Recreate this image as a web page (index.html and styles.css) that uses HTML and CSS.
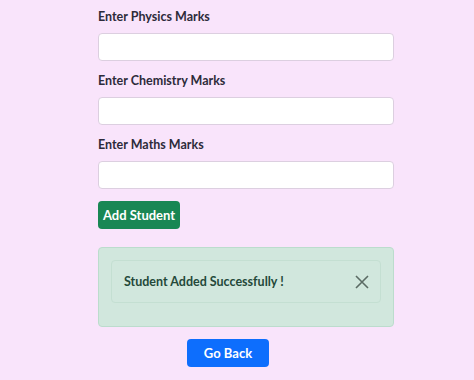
FILE: index.html
```html
<!DOCTYPE html>
<html>
<head lang="en">
    <meta charset="UTF-8">
    <title>Add Student</title>
    <link rel="stylesheet" href="styles.css">
</head>
<body>
<div class="container">
    <form class="student-form">
        <div class="field">
            <label for="physics">Enter Physics Marks</label>
            <input type="text" id="physics"/>
        </div>
        <div class="field">
            <label for="chemistry">Enter Chemistry Marks</label>
            <input type="text" id="chemistry"/>
        </div>
        <div class="field">
            <label for="maths">Enter Maths Marks</label>
            <input type="text" id="maths"/>
        </div>
        <button type="button" class="btn btn-add">Add Student</button>
    </form>

    <div class="result">
        <div class="alert">
            <span>Student Added Successfully !</span>
            <span class="close">
                <svg width="14" height="14" viewBox="0 0 14 14">
                    <path d="M1 1 L13 13 M13 1 L1 13" stroke="#5b6b64" stroke-width="1.6" fill="none"/>
                </svg>
            </span>
        </div>
    </div>

    <button type="button" class="btn btn-back">Go Back</button>
</div>
</body>
</html>
```

FILE: styles.css
```css
html, body {
    padding: 0;
    margin: 0;
}

body {
    background: #f9e4fb;
    font-family: 'Lato', 'Noto Sans', sans-serif;
    color: #2d2b3a;
}

.container {
    width: 296px;
    margin: 0 auto;
    padding-top: 5px;
    position: relative;
    left: 9px;
}

.student-form {
    margin: 0;
}

.field {
    margin-bottom: 8px;
}

.field label {
    display: block;
    font-size: 12.5px;
    font-weight: 700;
    line-height: 20px;
    padding-top: 2px;
    margin-bottom: 6px;
}

.field input {
    display: block;
    box-sizing: border-box;
    width: 100%;
    height: 28px;
    border: 1px solid #dccfe0;
    border-radius: 4px;
    background: #fff;
    outline: none;
}

.btn {
    display: block;
    font-family: 'Lato', 'Noto Sans', sans-serif;
    font-size: 13px;
    font-weight: 700;
    color: #fff;
    border: none;
    border-radius: 4px;
    height: 28px;
    width: 82px;
    padding: 0;
    white-space: nowrap;
}

.btn-add {
    background: #198754;
    margin-top: 12px;
}

.btn-back {
    background: #0d6efd;
    margin: 12px 0 0 89px;
}

.result {
    margin-top: 18px;
    box-sizing: border-box;
    height: 80px;
    background: #d1e7dd;
    border: 1px solid #bcdccd;
    border-radius: 4px;
    padding: 12px;
}

.alert {
    display: flex;
    align-items: center;
    justify-content: space-between;
    height: 43px;
    box-sizing: border-box;
    border: 1px solid #c4dfd2;
    border-radius: 4px;
    padding: 0 11px 0 12px;
    font-size: 12.5px;
    font-weight: 700;
    color: #24493a;
}

.close {
    display: flex;
}
```
